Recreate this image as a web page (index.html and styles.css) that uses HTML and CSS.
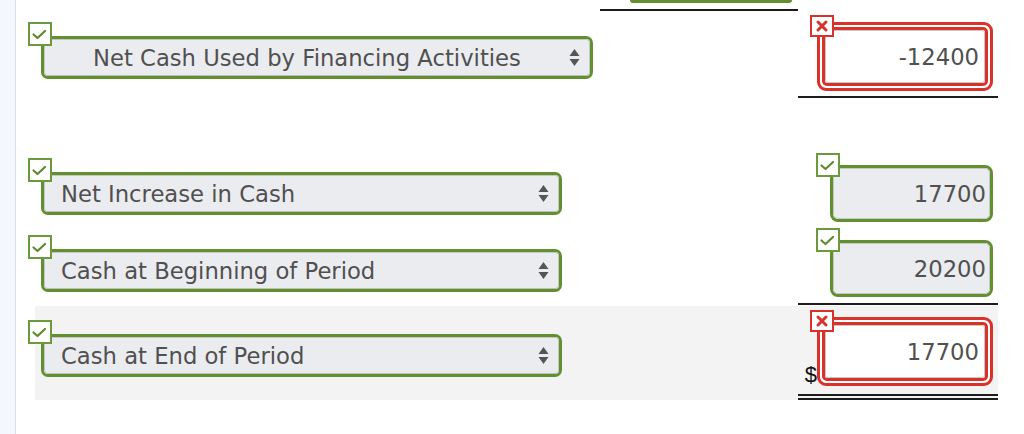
FILE: index.html
```
<!DOCTYPE html>
<html>
<head>
<meta charset="utf-8">
<link rel="stylesheet" href="styles.css">
</head>
<body>
<div class="page">
  <div class="sidebar"></div>
  <div class="main">
    <div class="row row-top">
      <div class="prev-total"><div class="prev-stub"></div></div>
    </div>

    <div class="row row-1">
      <div class="label-cell">
        <div class="select-wrap wide">
          <span class="badge badge-ok"><svg width="20" height="20" viewBox="0 0 20 20"><polyline points="3.5,10.5 7.5,14 15,7" fill="none" stroke="#5d8b2c" stroke-width="2.2" stroke-linecap="round" stroke-linejoin="round"/></svg></span>
          <div class="select select-center">
            <span class="select-text">Net Cash Used by Financing Activities</span>
            <svg class="arrows" width="11" height="20" viewBox="0 0 11 20"><polygon points="5.5,1 10.5,8 0.5,8" fill="#555"/><polygon points="0.5,11 10.5,11 5.5,18" fill="#555"/></svg>
          </div>
        </div>
      </div>
      <div class="amount-cell underline">
        <div class="amount-bad">
          <span class="badge badge-bad"><svg width="20" height="18" viewBox="0 0 20 18"><path d="M6 5 L14 13 M14 5 L6 13" stroke="#d8322b" stroke-width="3" stroke-linecap="round"/></svg></span>
          <div class="bad-inner"><div class="amount-input white">-12400</div></div>
        </div>
      </div>
    </div>

    <div class="row row-2">
      <div class="label-cell">
        <div class="select-wrap">
          <span class="badge badge-ok"><svg width="20" height="20" viewBox="0 0 20 20"><polyline points="3.5,10.5 7.5,14 15,7" fill="none" stroke="#5d8b2c" stroke-width="2.2" stroke-linecap="round" stroke-linejoin="round"/></svg></span>
          <div class="select">
            <span class="select-text">Net Increase in Cash</span>
            <svg class="arrows" width="11" height="20" viewBox="0 0 11 20"><polygon points="5.5,1 10.5,8 0.5,8" fill="#555"/><polygon points="0.5,11 10.5,11 5.5,18" fill="#555"/></svg>
          </div>
        </div>
      </div>
      <div class="amount-cell">
        <div class="amount-ok">
          <span class="badge badge-ok badge-amount"><svg width="20" height="20" viewBox="0 0 20 20"><polyline points="3.5,10.5 7.5,14 15,7" fill="none" stroke="#5d8b2c" stroke-width="2.2" stroke-linecap="round" stroke-linejoin="round"/></svg></span>
          <div class="amount-input gray">17700</div>
        </div>
      </div>
    </div>

    <div class="row row-3">
      <div class="label-cell">
        <div class="select-wrap">
          <span class="badge badge-ok"><svg width="20" height="20" viewBox="0 0 20 20"><polyline points="3.5,10.5 7.5,14 15,7" fill="none" stroke="#5d8b2c" stroke-width="2.2" stroke-linecap="round" stroke-linejoin="round"/></svg></span>
          <div class="select">
            <span class="select-text">Cash at Beginning of Period</span>
            <svg class="arrows" width="11" height="20" viewBox="0 0 11 20"><polygon points="5.5,1 10.5,8 0.5,8" fill="#555"/><polygon points="0.5,11 10.5,11 5.5,18" fill="#555"/></svg>
          </div>
        </div>
      </div>
      <div class="amount-cell underline">
        <div class="amount-ok">
          <span class="badge badge-ok badge-amount"><svg width="20" height="20" viewBox="0 0 20 20"><polyline points="3.5,10.5 7.5,14 15,7" fill="none" stroke="#5d8b2c" stroke-width="2.2" stroke-linecap="round" stroke-linejoin="round"/></svg></span>
          <div class="amount-input gray">20200</div>
        </div>
      </div>
    </div>

    <div class="row row-4">
      <div class="label-cell">
        <div class="select-wrap">
          <span class="badge badge-ok"><svg width="20" height="20" viewBox="0 0 20 20"><polyline points="3.5,10.5 7.5,14 15,7" fill="none" stroke="#5d8b2c" stroke-width="2.2" stroke-linecap="round" stroke-linejoin="round"/></svg></span>
          <div class="select">
            <span class="select-text">Cash at End of Period</span>
            <svg class="arrows" width="11" height="20" viewBox="0 0 11 20"><polygon points="5.5,1 10.5,8 0.5,8" fill="#555"/><polygon points="0.5,11 10.5,11 5.5,18" fill="#555"/></svg>
          </div>
        </div>
      </div>
      <div class="amount-cell double">
        <span class="dollar">$</span>
        <div class="amount-bad">
          <span class="badge badge-bad"><svg width="20" height="18" viewBox="0 0 20 18"><path d="M6 5 L14 13 M14 5 L6 13" stroke="#d8322b" stroke-width="3" stroke-linecap="round"/></svg></span>
          <div class="bad-inner"><div class="amount-input white">17700</div></div>
        </div>
      </div>
    </div>
  </div>
</div>
</body>
</html>
```

FILE: styles.css
```
* { box-sizing: border-box; }
html, body { margin: 0; padding: 0; background: #fff; }
body { width: 1024px; height: 434px; overflow: hidden; font-family: "DejaVu Sans", Verdana, sans-serif; }

.page { display: flex; height: 434px; }
.sidebar { width: 16px; background: #f4f7fb; border-right: 1px solid #d9e0ea; }
.main { flex: 1; padding-left: 19px; }

.row { display: flex; width: 963px; align-items: flex-start; }
.label-cell { width: 763px; padding-left: 6px; }
.amount-cell { width: 200px; display: flex; justify-content: flex-end; align-items: flex-end; padding-right: 5px; }
.underline { border-bottom: 2px solid #1c1c1c; }
.double { border-bottom: 6px double #1c1c1c; }

/* top remnant */
.row-top { height: 11px; }
.prev-total { margin-left: 565px; width: 198px; height: 11px; border-bottom: 2px solid #1c1c1c; }
.prev-stub { margin-left: 30px; width: 162px; height: 3px; background: #62902e; border-radius: 0 0 7px 7px; }

/* select */
.select-wrap { position: relative; width: 521px; height: 43px; border: 3px solid #62902e; border-radius: 7px; }
.select-wrap.wide { width: 552px; }
.select { height: 100%; display: flex; align-items: center; background: #ebecef; border: 1px solid #c6c6c6; border-bottom-color: #bdbdbd; border-radius: 4px; padding-left: 16px; padding-right: 9px; }
.select-center { padding-left: 48px; }
.select-text { flex: 1; font-size: 22.7px; color: #505050; white-space: nowrap; }
.arrows { display: block; }

/* badges */
.badge { position: absolute; display: flex; align-items: center; justify-content: center; background: #fff; z-index: 2; }
.badge-ok { left: -16px; top: -17px; width: 24px; height: 24px; border: 2px solid #6a9a3c; }
.badge-amount { left: -17px; top: -15px; }
.badge-bad { left: -10px; top: -10px; width: 24px; height: 22px; border: 2px solid #d8322b; }

/* amounts */
.amount-ok { position: relative; width: 163px; height: 57px; border: 3px solid #62902e; border-radius: 8px; }
.amount-bad { position: relative; width: 176px; height: 69px; border: 3px solid #d8322b; border-radius: 9px; padding: 2px; background: #fff; }
.bad-inner { height: 100%; border: 3px solid #d8322b; border-radius: 5px; }
.amount-input { height: 100%; display: flex; align-items: center; justify-content: flex-end; font-size: 22.7px; color: #505050; border: 1px solid #c8c8c8; border-radius: 4px; }
.amount-input.gray { background: #ebecef; padding-right: 3px; border-radius: 5px; }
.amount-input.white { background: #fff; padding-right: 5px; border-radius: 3px; }

.dollar { font-family: "Liberation Sans", Arial, sans-serif; font-size: 22px; line-height: 20px; color: #111; margin-bottom: 1px; }

/* rows */
.row-1 .label-cell { padding-top: 25px; }
.row-1 .amount-cell { padding-top: 11px; padding-bottom: 5px; }
.row-2 .label-cell { padding-top: 74px; }
.row-2 .amount-cell { padding-top: 67px; }
.row-3 .label-cell { padding-top: 27px; }
.row-3 .amount-cell { padding-top: 18px; padding-bottom: 6px; }
.row-4 { margin-top: 1px; background: #f3f3f3; }
.row-4 .label-cell { padding-top: 28px; }
.row-4 .amount-cell { padding-top: 11px; padding-bottom: 8px; }
```
